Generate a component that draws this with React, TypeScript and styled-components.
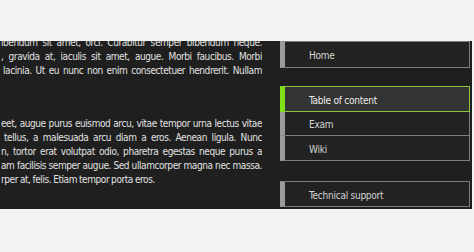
import React from "react";
import styled, { createGlobalStyle } from "styled-components";

const Global = createGlobalStyle`
  html, body { margin: 0; padding: 0; background: #f3f3f3; }
  body { font-family: "DejaVu Sans Condensed", "DejaVu Sans", sans-serif; }
`;

const Page = styled.div`
  width: 474px;
  height: 252px;
  display: flex;
  flex-direction: column;
  background: #f3f3f3;
  overflow: hidden;
`;

const Header = styled.div`
  height: 41px;
  flex: none;
`;

const Main = styled.div`
  height: 168px;
  width: 472px;
  flex: none;
  background: #1f1f1f;
  display: flex;
  overflow: hidden;
`;

const TextCol = styled.div`
  width: 261px;
  padding-left: 1px;
  margin-top: -5px;
  flex: none;
  color: #e2e2e2;
  font-size: 10px;
  line-height: 14px;
  letter-spacing: -0.42px;
  word-spacing: -0.5px;
`;

const Para = styled.div<{ $gap?: number }>`
  margin-bottom: ${(p) => p.$gap ?? 0}px;
`;

const Line = styled.div<{ $last?: boolean; $indent?: number }>`
  text-align: justify;
  text-align-last: ${(p) => (p.$last ? "left" : "justify")};
  padding-left: ${(p) => p.$indent ?? 0}px;
  height: 14px;
  overflow: hidden;
`;

const Sidebar = styled.nav`
  margin-left: 18px;
  width: 190px;
  flex: none;
  display: flex;
  flex-direction: column;
`;

const Group = styled.div<{ $gap?: number }>`
  display: flex;
  flex-direction: column;
  margin-bottom: ${(p) => p.$gap ?? 0}px;
`;

const Item = styled.a<{ $active?: boolean; $first?: boolean; $h?: number }>`
  display: flex;
  align-items: center;
  box-sizing: border-box;
  height: ${(p) => p.$h ?? 25}px;
  padding-left: 24px;
  padding-top: 2px;
  font-size: 10px;
  letter-spacing: -0.25px;
  color: ${(p) => (p.$active ? "#ececec" : "#d4d4d4")};
  text-decoration: none;
  background: ${(p) => (p.$active ? "#333333" : "#222222")};
  border-left: 5px solid ${(p) => (p.$active ? "#7fe01a" : "#9b9b9b")};
  border-right: 1px solid ${(p) => (p.$active ? "#8cc63f" : "#7c7c7c")};
  border-bottom: 1px solid ${(p) => (p.$active ? "#8cc63f" : "#7c7c7c")};
  border-top: ${(p) =>
    p.$active
      ? "1px solid #8cc63f"
      : p.$first
      ? "1px solid #7c7c7c"
      : "none"};
  margin-bottom: ${(p) => (p.$active ? "-1px" : "0")};
  position: relative;
  z-index: ${(p) => (p.$active ? 1 : 0)};
`;

export default function App() {
  return (
    <>
      <Global />
      <Page>
        <Header />
        <Main>
          <TextCol>
            <Para $gap={39}>
              <Line>ibendum sit amet, orci. Curabitur semper bibendum neque.</Line>
              <Line>, gravida at, iaculis sit amet, augue. Morbi faucibus. Morbi</Line>
              <Line $indent={2}>lacinia. Ut eu nunc non enim consectetuer hendrerit. Nullam</Line>
            </Para>
            <Para>
              <Line>eet, augue purus euismod arcu, vitae tempor urna lectus vitae</Line>
              <Line $indent={3}>tellus, a malesuada arcu diam a eros. Aenean ligula. Nunc</Line>
              <Line>n, tortor erat volutpat odio, pharetra egestas neque purus a</Line>
              <Line>am facilisis semper augue. Sed ullamcorper magna nec massa.</Line>
              <Line $last>rper at, felis. Etiam tempor porta eros.</Line>
            </Para>
          </TextCol>
          <Sidebar>
            <Group $gap={18}>
              <Item $first $h={27} href="#">Home</Item>
            </Group>
            <Group $gap={20}>
              <Item $active $h={26} href="#">Table of content</Item>
              <Item href="#">Exam</Item>
              <Item href="#">Wiki</Item>
            </Group>
            <Group>
              <Item $first $h={26} href="#">Technical support</Item>
            </Group>
          </Sidebar>
        </Main>
      </Page>
    </>
  );
}
